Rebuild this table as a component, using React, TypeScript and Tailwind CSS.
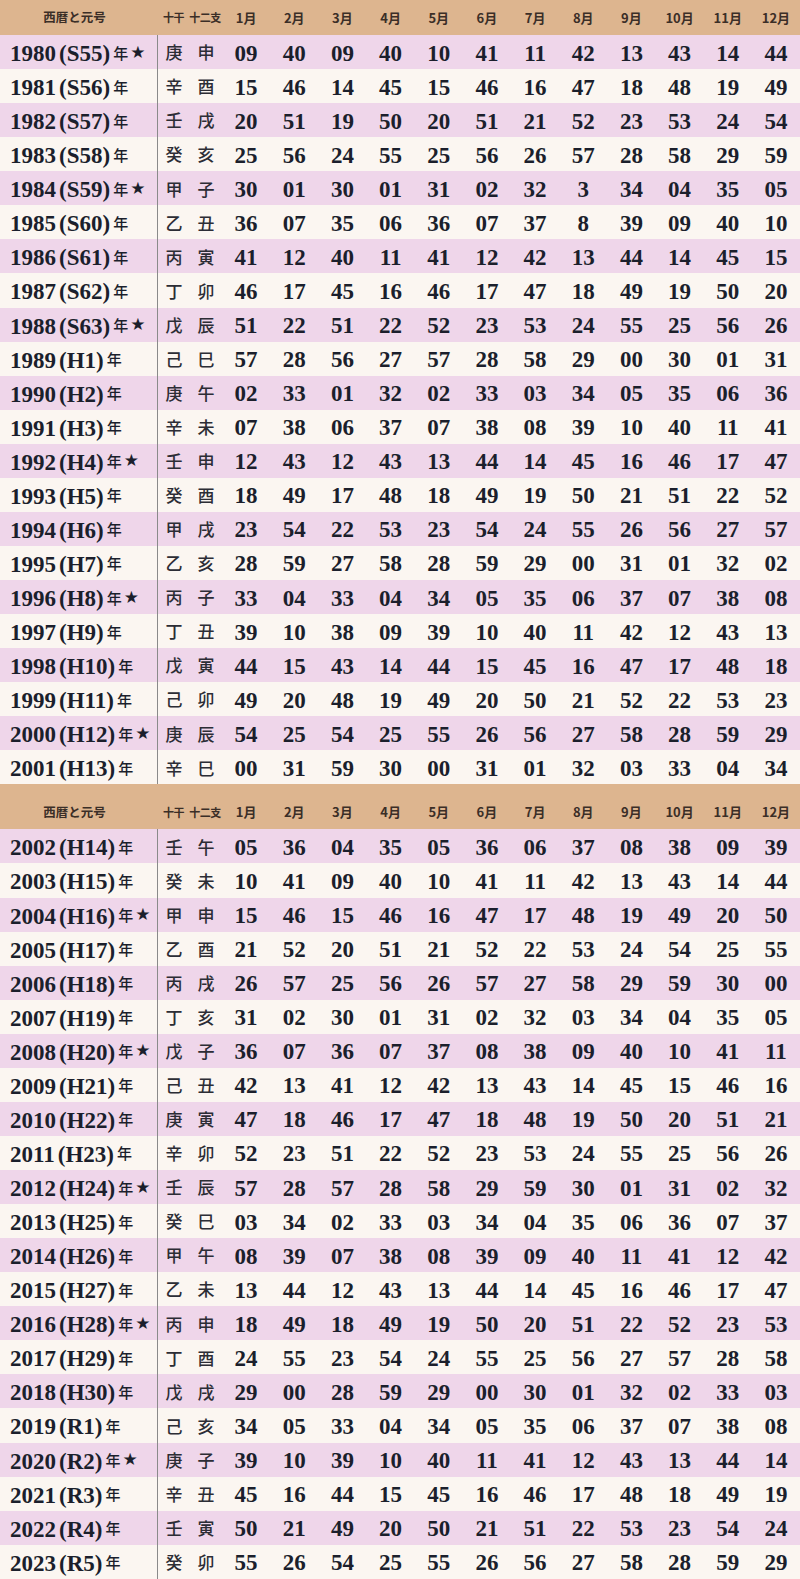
type Row = [string, string, boolean, string, string, string]

// year, era, star, 十干, 十二支, months (space separated)
const table1: Row[] = [
  ['1980', 'S55', true, '庚', '申', '09 40 09 40 10 41 11 42 13 43 14 44'],
  ['1981', 'S56', false, '辛', '酉', '15 46 14 45 15 46 16 47 18 48 19 49'],
  ['1982', 'S57', false, '壬', '戌', '20 51 19 50 20 51 21 52 23 53 24 54'],
  ['1983', 'S58', false, '癸', '亥', '25 56 24 55 25 56 26 57 28 58 29 59'],
  ['1984', 'S59', true, '甲', '子', '30 01 30 01 31 02 32 3 34 04 35 05'],
  ['1985', 'S60', false, '乙', '丑', '36 07 35 06 36 07 37 8 39 09 40 10'],
  ['1986', 'S61', false, '丙', '寅', '41 12 40 11 41 12 42 13 44 14 45 15'],
  ['1987', 'S62', false, '丁', '卯', '46 17 45 16 46 17 47 18 49 19 50 20'],
  ['1988', 'S63', true, '戊', '辰', '51 22 51 22 52 23 53 24 55 25 56 26'],
  ['1989', 'H1', false, '己', '巳', '57 28 56 27 57 28 58 29 00 30 01 31'],
  ['1990', 'H2', false, '庚', '午', '02 33 01 32 02 33 03 34 05 35 06 36'],
  ['1991', 'H3', false, '辛', '未', '07 38 06 37 07 38 08 39 10 40 11 41'],
  ['1992', 'H4', true, '壬', '申', '12 43 12 43 13 44 14 45 16 46 17 47'],
  ['1993', 'H5', false, '癸', '酉', '18 49 17 48 18 49 19 50 21 51 22 52'],
  ['1994', 'H6', false, '甲', '戌', '23 54 22 53 23 54 24 55 26 56 27 57'],
  ['1995', 'H7', false, '乙', '亥', '28 59 27 58 28 59 29 00 31 01 32 02'],
  ['1996', 'H8', true, '丙', '子', '33 04 33 04 34 05 35 06 37 07 38 08'],
  ['1997', 'H9', false, '丁', '丑', '39 10 38 09 39 10 40 11 42 12 43 13'],
  ['1998', 'H10', false, '戊', '寅', '44 15 43 14 44 15 45 16 47 17 48 18'],
  ['1999', 'H11', false, '己', '卯', '49 20 48 19 49 20 50 21 52 22 53 23'],
  ['2000', 'H12', true, '庚', '辰', '54 25 54 25 55 26 56 27 58 28 59 29'],
  ['2001', 'H13', false, '辛', '巳', '00 31 59 30 00 31 01 32 03 33 04 34'],
]

const table2: Row[] = [
  ['2002', 'H14', false, '壬', '午', '05 36 04 35 05 36 06 37 08 38 09 39'],
  ['2003', 'H15', false, '癸', '未', '10 41 09 40 10 41 11 42 13 43 14 44'],
  ['2004', 'H16', true, '甲', '申', '15 46 15 46 16 47 17 48 19 49 20 50'],
  ['2005', 'H17', false, '乙', '酉', '21 52 20 51 21 52 22 53 24 54 25 55'],
  ['2006', 'H18', false, '丙', '戌', '26 57 25 56 26 57 27 58 29 59 30 00'],
  ['2007', 'H19', false, '丁', '亥', '31 02 30 01 31 02 32 03 34 04 35 05'],
  ['2008', 'H20', true, '戊', '子', '36 07 36 07 37 08 38 09 40 10 41 11'],
  ['2009', 'H21', false, '己', '丑', '42 13 41 12 42 13 43 14 45 15 46 16'],
  ['2010', 'H22', false, '庚', '寅', '47 18 46 17 47 18 48 19 50 20 51 21'],
  ['2011', 'H23', false, '辛', '卯', '52 23 51 22 52 23 53 24 55 25 56 26'],
  ['2012', 'H24', true, '壬', '辰', '57 28 57 28 58 29 59 30 01 31 02 32'],
  ['2013', 'H25', false, '癸', '巳', '03 34 02 33 03 34 04 35 06 36 07 37'],
  ['2014', 'H26', false, '甲', '午', '08 39 07 38 08 39 09 40 11 41 12 42'],
  ['2015', 'H27', false, '乙', '未', '13 44 12 43 13 44 14 45 16 46 17 47'],
  ['2016', 'H28', true, '丙', '申', '18 49 18 49 19 50 20 51 22 52 23 53'],
  ['2017', 'H29', false, '丁', '酉', '24 55 23 54 24 55 25 56 27 57 28 58'],
  ['2018', 'H30', false, '戊', '戌', '29 00 28 59 29 00 30 01 32 02 33 03'],
  ['2019', 'R1', false, '己', '亥', '34 05 33 04 34 05 35 06 37 07 38 08'],
  ['2020', 'R2', true, '庚', '子', '39 10 39 10 40 11 41 12 43 13 44 14'],
  ['2021', 'R3', false, '辛', '丑', '45 16 44 15 45 16 46 17 48 18 49 19'],
  ['2022', 'R4', false, '壬', '寅', '50 21 49 20 50 21 51 22 53 23 54 24'],
  ['2023', 'R5', false, '癸', '卯', '55 26 54 25 55 26 56 27 58 28 59 29'],
]

const months = ['1月', '2月', '3月', '4月', '5月', '6月', '7月', '8月', '9月', '10月', '11月', '12月']

const grid = 'grid grid-cols-[157px_33px_32px_repeat(12,minmax(0,1fr))]'
const serif = "font-['Liberation_Serif',serif] font-bold"
const sans = "font-['Noto_Sans_CJK_JP','Noto_Sans',sans-serif]"

function Header({ tall }: { tall?: boolean }) {
  return (
    <div
      className={`${grid} ${sans} bg-[#ddb58f] text-[#3b2e27] font-bold items-center whitespace-nowrap ${
        tall ? 'h-[45px] pt-[10px]' : 'h-[35px]'
      }`}
    >
      <div className="text-[12.5px] text-center pr-[8px]">西暦と元号</div>
      <div className="text-[11px] text-center tracking-[-0.5px]">十干</div>
      <div className="text-[11px] flex justify-center tracking-[-0.5px] pr-[2px]">
        <span>十二支</span>
      </div>
      {months.map((m) => (
        <div key={m} className="text-[13px] text-center">
          {m}
        </div>
      ))}
    </div>
  )
}

function Table({ rows }: { rows: Row[] }) {
  return (
    <div>
      {rows.map(([year, era, star, kan, shi, nums], i) => (
        <div
          key={year}
          className={`${grid} h-[34.07px] items-center text-[#1b1f2c] ${
            i % 2 === 0 ? 'bg-[#efd6ea]' : 'bg-[#fbf6f1]'
          }`}
        >
          <div className="flex items-center pl-[10px] whitespace-nowrap">
            <span className={`${serif} text-[23px] leading-none pt-[3px]`}>{year}</span>
            <span className={`${serif} text-[23px] leading-none pt-[3px] ml-[3px]`}>({era})</span>
            <span className={`${sans} text-[15px] font-medium leading-none ml-[3px]`}>年</span>
            {star && (
              <span className="font-['DejaVu_Sans',sans-serif] text-[17px] leading-none ml-[2px]">★</span>
            )}
          </div>
          <div
            className={`${sans} h-full flex items-center justify-center border-l border-[#8a8a8a] text-[17px] font-medium text-[#2c2d35]`}
          >
            {kan}
          </div>
          <div className={`${sans} text-center text-[17px] font-medium text-[#2c2d35]`}>{shi}</div>
          {nums.split(' ').map((n, j) => (
            <div key={j} className={`${serif} text-center text-[23px] leading-none pt-[2px]`}>
              {n}
            </div>
          ))}
        </div>
      ))}
    </div>
  )
}

export default function App() {
  return (
    <div className="w-[800px] bg-[#fbf6f1]">
      <Header />
      <Table rows={table1} />
      <Header tall />
      <Table rows={table2} />
    </div>
  )
}
